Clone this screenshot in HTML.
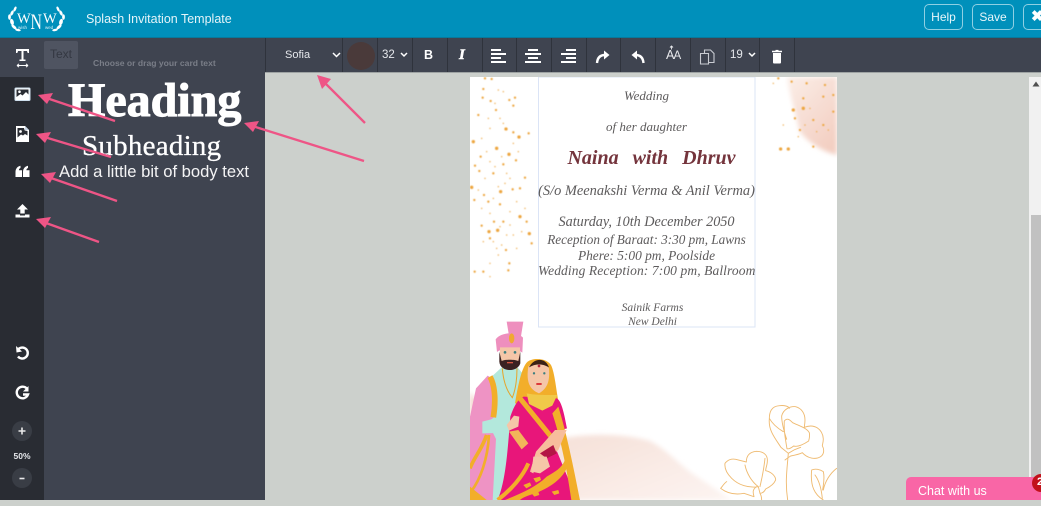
<!DOCTYPE html>
<html lang="en"><head><meta charset="utf-8"><title>Splash Invitation Template</title>
<style>
*{box-sizing:border-box}
html,body{margin:0;padding:0;width:1041px;height:500px;overflow:hidden;background:#ccd0cc;font-family:"Liberation Sans",sans-serif}
.a{position:absolute;white-space:nowrap}
#hdr{left:0;top:0;width:1041px;height:38px;background:#0090bb;border-bottom:1px solid #087a9c}
.btn{position:absolute;top:4px;height:26px;border:1px solid #8fd0e3;border-radius:5px;color:#e8f6fa;font-size:12px;line-height:24px;text-align:center}
#side{left:0;top:77px;width:44px;height:423px;background:#292c33}
#panel{left:0;top:38px;width:265px;height:462px;background:#3f4450}
#tool{left:265px;top:38px;width:776px;height:35px;background:#3f4450;border-bottom:1px solid #9ea3a3}
.d{position:absolute;top:0;width:1px;height:34px;background:#2f333c}
#card{left:470px;top:77px;width:367px;height:423px;background:#fff}
.c{position:absolute;left:538px;width:217px;text-align:center;font-family:"Liberation Serif",serif;font-style:italic;color:#5d5b5c;white-space:nowrap}
</style></head><body>
<div class="a" id="hdr"></div>
<svg class="a" style="left:5px;top:5px" width="66" height="28" viewBox="0 0 66 28">
<g fill="#fff"><ellipse cx="7" cy="17" rx="1.800" ry="3.200" transform="rotate(-15 7 17)"/><ellipse cx="4.500" cy="12" rx="1.400" ry="2.800"/><ellipse cx="7" cy="8" rx="1.400" ry="2.800" transform="rotate(25 7 8)"/><ellipse cx="10" cy="4" rx="1.200" ry="2.600" transform="rotate(25 10 4)"/><ellipse cx="9" cy="22" rx="3.200" ry="1.400" transform="rotate(40 9 22)"/><ellipse cx="13" cy="25" rx="2.800" ry="1.200" transform="rotate(10 13 25)"/>
<ellipse cx="56" cy="17" rx="1.800" ry="3.200" transform="rotate(15 56 17)"/><ellipse cx="58.500" cy="12" rx="1.400" ry="2.800"/><ellipse cx="56" cy="8" rx="1.400" ry="2.800" transform="rotate(-25 56 8)"/><ellipse cx="53" cy="4" rx="1.200" ry="2.600" transform="rotate(-25 53 4)"/><ellipse cx="54" cy="22" rx="3.200" ry="1.400" transform="rotate(-40 54 22)"/><ellipse cx="50" cy="25" rx="2.800" ry="1.200" transform="rotate(-10 50 25)"/></g>
<text x="12" y="18" font-family="Liberation Serif" font-size="14.500" fill="#fff">W</text><text transform="translate(25.500 24) scale(.72 1)" font-family="Liberation Serif" font-size="22" fill="#fff">N</text><text x="38" y="18" font-family="Liberation Serif" font-size="14.500" fill="#fff">W</text>
<text x="13" y="24" font-family="Liberation Sans" font-size="4.500" fill="#d7eef5">wish</text><text x="40" y="24" font-family="Liberation Sans" font-size="4.500" fill="#d7eef5">wed</text></svg>
<div class="a" style="left:86px;top:12px;font-size:12.500px;color:#e4f4f9">Splash Invitation Template</div>
<div class="btn" style="left:924px;width:39px">Help</div>
<div class="btn" style="left:972px;width:42px">Save</div>
<div class="btn" style="left:1023px;width:30px;text-align:left;padding-left:7px;font-weight:bold;font-size:15px;color:#fff">✖</div>

<div class="a" id="panel"></div>
<div class="a" id="side"></div>
<div class="a" style="left:44px;top:41px;width:34px;height:28px;background:#4f5461;border-radius:2px;color:#343842;font-size:12px;line-height:27px;text-align:center">Text</div>
<div class="a" style="left:93px;top:58px;font-size:8.600px;font-weight:bold;color:#7a7e88">Choose or drag your card text</div>
<div class="a" style="left:68px;top:73px;font-family:'Liberation Serif',serif;font-weight:bold;font-size:48px;line-height:56px;color:#fff;-webkit-text-stroke:1px #fff">Heading</div>
<div class="a" style="left:82px;top:129px;font-family:'Liberation Serif',serif;font-size:29px;line-height:34px;color:#fff;-webkit-text-stroke:.3px #fff;letter-spacing:.25px">Subheading</div>
<div class="a" style="left:59px;top:162px;font-size:16.600px;line-height:19px;color:#f4f4f5">Add a little bit of body text</div>

<svg class="a" style="left:0;top:38px" width="44" height="210" viewBox="0 38 44 210" fill="#fff">
<path d="M16 49h13v4h-1.300l-.8-2h-3.400v8.500h2v1.500h-6v-1.500h2V51h-3.400l-.8 2H16z"/><path d="M17 65.500h11M17 65.500l2-1.600M17 65.500l2 1.600M28 65.500l-2-1.600M28 65.500l-2 1.600" stroke="#fff" stroke-width="1" fill="none"/>
<rect x="15" y="88" width="15" height="12.500" rx="1" fill="#fff" stroke="#cfe0ee" stroke-width="1"/><path d="M16.500 89.500h12v5l-2.500-2.500-3.500 3.500-2-1.500-4 3z" fill="#292c33"/><circle cx="19.500" cy="91.700" r="1.300"/>
<path d="M16 126h9l4 4v12H16z"/><path d="M17.500 128h6.500l.7 2.500 2.800.5v4.500l-2.500-1.500-2 1.500-2-1-3.500 3z" fill="#292c33"/><circle cx="20.500" cy="131.500" r="1.400"/><path d="M25 126l4 4h-4z" fill="#c8d6e6"/>
<path d="M15.500 172c0-3 1.500-5.500 5-6.300v2.300c-1 .4-1.600 1.200-1.600 2.300H22v6.700h-6.500zM23 172c0-3 1.500-5.500 5-6.300v2.300c-1 .4-1.600 1.200-1.600 2.300H29.500v6.700H23z"/>
<path d="M22.500 204l-5.500 5.500h3.300v4h4.400v-4H28z"/><path d="M15.500 214.500h4.500v1h5v-1h4.500v3H15.500z"/>
</svg>
<svg class="a" style="left:0;top:340px" width="44" height="160" viewBox="0 340 44 160">
<path d="M18.500 349a5.500 5.500 0 1 1-.5 7.500" fill="none" stroke="#fff" stroke-width="2.400"/><path d="M16 346l.5 6.500 5.500-1z" fill="#fff"/>
<path d="M27.200 389a5.800 5.800 0 1 0 .8 5.500h-5" fill="none" stroke="#fff" stroke-width="2.400"/><path d="M28.500 386v5.500h-5.500z" fill="#fff"/>
<circle cx="22" cy="431" r="10" fill="#393d45"/><path d="M18.500 431h7M22 427.500v7" stroke="#e9e9ea" stroke-width="1.600"/>
<circle cx="22" cy="478" r="10" fill="#393d45"/><path d="M19.500 478.500h5" stroke="#e9e9ea" stroke-width="1.600"/></svg>
<div class="a" style="left:0;top:451px;width:44px;text-align:center;font-size:8.500px;font-weight:bold;color:#e6e8ec">50%</div>

<div class="a" id="tool">
<i class="d" style="left:77px"></i><i class="d" style="left:112px"></i><i class="d" style="left:147px"></i><i class="d" style="left:182px"></i><i class="d" style="left:217px"></i><i class="d" style="left:251px"></i><i class="d" style="left:286px"></i><i class="d" style="left:321px"></i><i class="d" style="left:355px"></i><i class="d" style="left:390px"></i><i class="d" style="left:425px"></i><i class="d" style="left:460px"></i><i class="d" style="left:494px"></i><i class="d" style="left:529px"></i>
<i class="d" style="left:0"></i>
<div class="a" style="left:20px;top:11px;font-size:11px;color:#e6e8ec">Sofia</div>
<div class="a" style="left:82px;top:4px;width:28px;height:28px;border-radius:50%;background:#4a3a3a"></div>
<div class="a" style="left:117px;top:11px;font-size:11.500px;color:#e6e8ec">32</div>
<div class="a" style="left:159px;top:10px;font-size:12.500px;font-weight:bold;color:#fff">B</div>
<div class="a" style="left:194px;top:9px;font-size:15px;font-weight:bold;font-style:italic;font-family:'Liberation Serif',serif;color:#fff;-webkit-text-stroke:.5px #fff">I</div>
<div class="a" style="left:465px;top:11px;font-size:11.500px;color:#e6e8ec">19</div>
<div class="a" style="left:401px;top:10px;font-size:12.500px;line-height:15px;color:#e8e9ec">A</div>
<div class="a" style="left:408.500px;top:11px;font-size:11.500px;line-height:14px;color:#e8e9ec">A</div>
</div>
<svg class="a" style="left:265px;top:38px" width="540" height="35" viewBox="265 38 540 35" fill="none" stroke="#fff">
<path d="M333 53l3.500 3.500 3.500-3.500M401 53l3 3 3-3M749 53l3 3 3-3" stroke-width="1.500"/>
<path d="M671.500 46.500v3M670 47.500l1.500-1.500 1.500 1.500" stroke="#e8e9ec" stroke-width=".9"/>
<g stroke-width="2"><path d="M491 50h10M491 54h15M491 58h10M491 62h15"/><path d="M528 50h10M525 54h16M528 58h10M525 62h16"/><path d="M566 50h10M561 54h15M566 58h10M561 62h15"/></g>
<path d="M597 63c.5-5.500 3.500-8 8-8" stroke-width="2.400"/><path d="M604 50.500l5.500 4.500-5.500 4.500z" fill="#fff" stroke="none"/>
<path d="M643.500 63c-.5-5.500-3.500-8-8-8" stroke-width="2.400"/><path d="M637 50.500l-5.500 4.500 5.500 4.500z" fill="#fff" stroke="none"/>
<path d="M700.500 53.500h5l3 0v10.500h-8z" stroke="#c9ccd2" stroke-width="1.100"/><path d="M704.500 53V50h6l3.500 3.500V62.500h-5.500" stroke="#c9ccd2" stroke-width="1.100"/>
<path d="M773 53h8v9.500a1 1 0 0 1-1 1h-6a1 1 0 0 1-1-1z" fill="#fff" stroke="none"/><path d="M772 51.500h10" stroke-width="1.500"/><path d="M775.500 50.500h3" stroke-width="1.200"/>
</svg>

<div class="a" style="left:1029px;top:77px;width:12px;height:423px;background:#f1f1f1"></div>
<div class="a" style="left:1031px;top:215px;width:10px;height:285px;background:#c1c1c1"></div>
<svg class="a" style="left:1032px;top:81px" width="8" height="6"><path d="M4 .5L7.500 5.500H.5z" fill="#505050"/></svg>

<div class="a" id="card"></div>
<svg class="a" style="left:470px;top:77px" width="367" height="423" viewBox="470 77 367 423">
<defs><filter id="b" x="-20%" y="-20%" width="140%" height="140%"><feGaussianBlur stdDeviation="2.500"/></filter><filter id="s"><feGaussianBlur stdDeviation="1.200"/></filter><filter id="f"><feGaussianBlur stdDeviation=".8"/></filter>
<linearGradient id="w" x1="0" y1="0" x2="1" y2="1"><stop offset="0" stop-color="#f2d9cf"/><stop offset=".5" stop-color="#f7e4dd"/><stop offset="1" stop-color="#fdf5f2"/></linearGradient>
<linearGradient id="t" x1="0" y1="0" x2=".7" y2="1"><stop offset="0" stop-color="#fbeee8"/><stop offset="1" stop-color="#f3cfc2"/></linearGradient></defs>
<path d="M787 77C790 96 796 115 800 132c10 12 24 20 37 23V77z" fill="url(#t)" filter="url(#b)"/>
<path d="M470 500V392c30 40 70 50 100 45 30-4 60-2 80 4 15 8 25 19 40 31 15 10 30 20 42 28z" fill="url(#w)" filter="url(#b)"/>
<g transform="translate(470 75) scale(.3333)" filter="url(#s)" fill="none" stroke="#eda63f" stroke-linecap="round">
<path stroke-width="10" d="M108 162h0M147 186h0M80 220h0M117 238h0M10 200h0M92 350h0M83 466h0M57 470h0M178 476h0M5 337h0M150 425h0M1000 100h0M970 105h0M932 222h0M955 222h0"/>
<path stroke-width="7" d="M40 42h0M38 68h0M62 78h0M118 75h0M135 68h0M130 92h0M78 105h0M25 120h0M130 172h0M176 175h0M138 256h0M100 268h0M32 245h0M15 272h0M28 288h0M70 295h0M165 308h0M128 343h0M150 340h0M42 360h0M13 375h0M55 380h0M90 388h0M170 440h0M35 452h0M185 505h0M60 490h0M108 525h0M118 565h0M14 590h0M40 590h0M115 586h0M100 440h0M72 440h0M65 12h0M45 10h0M925 10h0M965 20h0M1010 25h0M1065 30h0M1090 60h0M1060 65h0M1000 70h0M975 130h0M1030 135h0M1090 110h0M1060 150h0M1030 215h0M990 165h0"/>
<path stroke-width="4.500" opacity=".85" d="M85 45h0M100 50h0M90 130h0M60 160h0M35 190h0M130 205h0M145 230h0M60 260h0M110 295h0M120 310h0M85 335h0M70 370h0M35 400h0M120 410h0M140 380h0M165 400h0M120 450h0M70 500h0M95 510h0M140 520h0M85 540h0M60 565h0M110 480h0M60 605h0M940 150h0M910 25h0M1020 100h0M1040 170h0M1075 165h0M1005 150h0M985 185h0M75 85h0M55 130h0M100 145h0M50 230h0M95 245h0M75 275h0M45 310h0M105 325h0M25 345h0M60 415h0M90 455h0M130 480h0M40 500h0M80 520h0M155 470h0"/></g>
<rect x="538.500" y="77" width="216.500" height="250" fill="none" stroke="#dbe4f6" stroke-width="1"/>
<!-- flowers -->
<g transform="translate(650 380) scale(.3333)" fill="none" stroke="#efbb72" stroke-width="2.800" stroke-linejoin="round" stroke-linecap="round">
<path d="M415 220c-4 50-10 85-2 140M415 220l-22-18c-20-30-38-52-35-85 0-20 5-38 30-40 15-2 28 2 30 8M395 108c5-20 25-30 42-28 18 5 28 20 28 40 0 10-2 18-2 22 30-12 55 5 57 35 0 8-2 15-3 20 8 15 3 28-5 33-15 10-40 5-55-12-10 5-25 8-35 10-8 5-12 8-17 12M403 123c8-10 15-5 25 5 15 8 42 15 50 30 2 10 0 18-2 25-18 12-35 18-45 15-10 8-15 10-20 8-5-30-10-55-8-83zM395 108c0 20 5 40 15 70M358 115c10 18 25 30 42 40M415 220l17-10 20-8"/>
<path d="M330 340l-5-20c-30 5-60-5-80-25-15-15-22-30-20-45 8-10 20-15 32-12l32 8c0-20 10-30 30-32 20 0 35 10 33 30 0 10-5 20-5 28 15 3 30 15 30 28-5 12-15 20-30 27-5 10-10 13-17 13M285 255c5 25 20 50 40 65M345 235c-3 30-8 55-15 85M320 320c-15 10-10 20-8 30l-30-10c-25 5-50 0-70-15 5-5 10-15 18-20M330 340c5 8 5 15 5 20"/>
<path d="M520 360c-25-15-40-40-35-90 10-5 25-2 35 5 5 20 0 40-2 55M520 330c5-25 20-50 40-65M495 285c15 20 20 50 22 70"/>
</g>
<!-- couple -->
<g transform="translate(465 310) scale(.3333)" filter="url(#f)">
<path d="M80 200l30-28h48l22 28-5 120-30 250H80z" fill="#b3e8dc"/>
<path d="M15 570V320l18-85 35-38 15 10 10 110-25 20 25 50-10 183z" fill="#ee93c4"/>
<path d="M75 200C92 230 92 280 85 322" fill="none" stroke="#f2ae2b" stroke-width="17"/>
<path d="M65 375C50 420 28 440 15 475" fill="none" stroke="#f2ae2b" stroke-width="11"/>
<path d="M72 375C68 450 45 510 18 545" fill="none" stroke="#f2ae2b" stroke-width="8"/>
<path d="M15 530L65 570H15z" fill="#f2ae2b"/>
<path d="M52 335l78-20 28 38-20 15-86 2z" fill="#b3e8dc"/>
<path d="M112 175c3 40 15 70 30 88 8-20 14-50 14-88" fill="none" stroke="#e6a42b" stroke-width="3"/>
<path d="M125 35l50 0-8 50-10 10-22 0z" fill="#ee8fbe"/>
<path d="M92 88c15-22 65-25 82-5l-2 45c-20-15-60-15-76-2z" fill="#ee8fbe"/>
<ellipse cx="140" cy="85" rx="8" ry="15" fill="#f0a830"/>
<path d="M105 112h60v35c0 20-15 28-30 28s-30-8-30-28z" fill="#f5c6a8"/>
<path d="M103 125l7 28c8-5 40-5 50 0l6-28 0 35c-5 15-20 20-32 20-15 0-30-8-31-25z" fill="#3a2420"/>
<circle cx="120" cy="127" r="4" fill="#3e7f80"/><circle cx="150" cy="127" r="4" fill="#3e7f80"/><path d="M126 158h18" stroke="#d2553f" stroke-width="4"/>
<path d="M150 280c8-50 20-110 38-125 15-12 55-12 70 10 12 25 15 75 25 125z" fill="#f2ae2b"/>
<path d="M98 570c25-60 30-150 38-250 12-35 25-55 40-60l100 5c15 10 22 50 30 90l-35 10-5 35 70 170z" fill="#e8127a"/>
<path d="M280 290C305 370 325 470 345 570h-26C305 470 285 380 262 310z" fill="#f2ae2b"/>
<path d="M165 265L262 385" fill="none" stroke="#f2ae2b" stroke-width="15"/>
<path d="M98 570c40-30 75-70 92-110" fill="none" stroke="#f2ae2b" stroke-width="12"/>
<path d="M190 170c15-15 50-18 62 5 3 40-5 60-30 75-25-10-40-30-32-80z" fill="#f5c6a8"/>
<path d="M192 172c15-30 50-30 60 0-20-12-40-12-60 0z" fill="#3a2018"/>
<path d="M185 250c20 5 60 5 92 5l-15 32-30 15-40-20z" fill="#f0c94a"/>
<circle cx="207" cy="190" r="3.500" fill="#3e7f80"/><circle cx="238" cy="190" r="3.500" fill="#3e7f80"/><path d="M214 222h16" stroke="#d81f26" stroke-width="5"/><circle cx="222" cy="168" r="4" fill="#b3263d"/>
<path d="M270 360l35 0-25 60-25 20-35 5-15 45-10-5 18-60z" fill="#f7bd9c"/>
<path d="M125 345l22-28 16 3-3 30-28 12z" fill="#f5c6a8"/>
<path d="M132 365l28-5 30 40-20 18z" fill="#f2b45a"/>
<path d="M225 430l40-25 10 25-30 15z" fill="#b31245"/>
<path d="M205 440l40 0 10 30-30 20-25-5z" fill="#f5c6a8"/>
<path d="M120 570c50-20 95-40 125-70 25-15 45-25 55-50l5 25c-15 35-60 65-110 80-15 5-25 10-30 15z" fill="#f2ae2b"/>
<path d="M175 525l20-8 4 10-15 8zM205 505l20-5 3 10-15 8zM260 545l20-5 3 10-15 5zM200 550l20-5 3 10-15 5z" fill="#f2ae2b"/>
</g>
<rect x="465" y="310" width="5" height="190" fill="#ccd0cc"/>
</svg>
<div class="c" style="top:88px;font-size:13px">Wedding</div>
<div class="c" style="top:119px;font-size:13px">of her daughter</div>
<div class="c" style="top:147px;font-size:20px;color:#74343c;font-weight:bold;word-spacing:9px;left:543px">Naina with Dhruv</div>
<div class="c" style="top:183px;font-size:14.400px">(S/o Meenakshi Verma &amp; Anil Verma)</div>
<div class="c" style="top:214px;font-size:14.200px">Saturday, 10th December 2050</div>
<div class="c" style="top:232px;font-size:13.200px">Reception of Baraat: 3:30 pm, Lawns</div>
<div class="c" style="top:248px;font-size:13.400px">Phere: 5:00 pm, Poolside</div>
<div class="c" style="top:263px;font-size:13.500px;letter-spacing:.1px">Wedding Reception: 7:00 pm, Ballroom</div>
<div class="c" style="top:302px;font-size:11.500px;left:544px">Sainik Farms</div>
<div class="c" style="top:316px;font-size:11.500px;left:544px">New Delhi</div>

<svg class="a" style="left:0;top:0" width="1041" height="500" fill="#ee5586">
<g stroke="#ee5586" stroke-width="2.300"><path d="M48 98.500L115 121"/><path d="M46 137.500L111 157"/><path d="M51 178L117 201"/><path d="M46 223L99 242"/><path d="M254 126.500L364 161"/><path d="M325 83L365 123"/></g>
<path d="M38 95l15-2-6 11zM36 134l15-2-6 11zM41 174l15-2-6 11zM36 219l15-2-6 11zM244 123l15-2-6 11zM317 75l14 4-9 10z"/>
</svg>

<div class="a" style="left:906px;top:477px;width:135px;height:23px;background:#f966a6;border-radius:5px 0 0 0;color:#fff;font-size:12.500px;line-height:29px;padding-left:12px">Chat with us</div>
<div class="a" style="left:1032px;top:474px;width:18px;height:18px;border-radius:50%;background:#c2111b;color:#fff;font-size:11px;line-height:16px;padding-left:5px;font-weight:bold">2</div>
</body></html>
